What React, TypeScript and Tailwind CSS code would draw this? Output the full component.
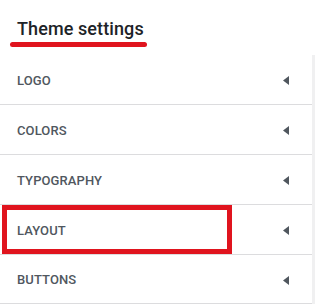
import React from "react";

const items = ["LOGO", "COLORS", "TYPOGRAPHY", "LAYOUT", "BUTTONS"];

function Arrow() {
  return (
    <svg width="6" height="9" viewBox="0 0 6 9" className="block">
      <path d="M6 0 L0 4.5 L6 9 Z" fill="#50575e" />
    </svg>
  );
}

export default function App() {
  return (
    <div
      className="relative w-[315px] h-[306px] bg-white overflow-hidden"
      style={{ fontFamily: "Roboto, 'Liberation Sans', sans-serif" }}
    >
      <div className="h-[55px] pl-[17px] pt-[17px]">
        <h2 className="text-[18px] leading-[24px] font-medium text-[#1d2327] tracking-[0.1px]">
          Theme settings
        </h2>
      </div>
      <div className="flex">
        <ul className="flex-1">
          {items.map((t) => (
            <li
              key={t}
              className="h-[50px] last:h-[49px] border-b border-[#dcdcde] flex items-center justify-between pl-[17px] pr-[23px] pt-[2px]"
            >
              <span className="text-[13px] font-medium text-[#50575e] tracking-[0.1px]">{t}</span>
              <Arrow />
            </li>
          ))}
        </ul>
        <div className="w-[3px] bg-[#f0f0f1]" />
      </div>
      <div className="absolute left-[10px] top-[42px] w-[137px] h-[5px] rounded-full bg-[#e0141e]" />
      <div className="absolute left-[2px] top-[205px] w-[230px] h-[49px] border-[5px] border-[#e0141e]" />
    </div>
  );
}
